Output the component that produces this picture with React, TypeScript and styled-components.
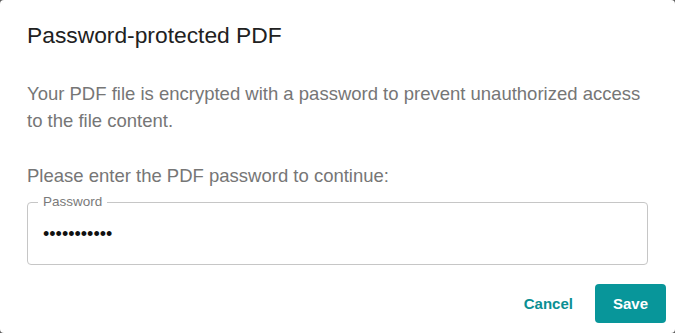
import React from 'react'
import styled, { createGlobalStyle } from 'styled-components'

const GlobalStyle = createGlobalStyle`
  html, body {
    margin: 0;
    padding: 0;
    background: #5c5c5c;
  }

  body {
    font-family: "Liberation Sans", Arial, sans-serif;
  }
`

const Dialog = styled.div`
  box-sizing: border-box;
  width: 675px;
  height: 333px;
  background: #ffffff;
  border-radius: 4px;
  display: flex;
  flex-direction: column;
`

const Body = styled.div`
  padding: 22px 27px 0;
  display: flex;
  flex-direction: column;
`

const Title = styled.h2`
  margin: 0;
  font-size: 22.8px;
  line-height: 26px;
  font-weight: 400;
  color: #212121;
`

const Text = styled.p<{ $gap: number }>`
  margin: ${({ $gap }) => $gap}px 0 0;
  font-size: 18.5px;
  line-height: 27px;
  color: #767676;
`

const Field = styled.div`
  position: relative;
  margin-top: 13px;
  height: 63px;
  box-sizing: border-box;
  border: 1px solid #c6c6c6;
  border-radius: 4px;
  display: flex;
  align-items: center;
`

const Legend = styled.label`
  position: absolute;
  top: -9px;
  left: 10px;
  padding: 0 5px;
  background: #ffffff;
  font-size: 13.5px;
  line-height: 16px;
  color: #7a7a7a;
`

const Input = styled.input`
  border: 0;
  outline: none;
  background: transparent;
  width: 100%;
  padding: 0 15px;
  margin-top: 1px;
  font-family: "Liberation Sans", Arial, sans-serif;
  font-size: 18px;
  color: #111111;
`

const Actions = styled.div`
  margin-top: auto;
  padding: 0 9px 10px 0;
  display: flex;
  justify-content: flex-end;
  align-items: center;
  gap: 10px;
`

const Button = styled.button<{ $primary?: boolean }>`
  height: 39px;
  padding: 0 ${({ $primary }) => ($primary ? 18 : 12)}px;
  border: 0;
  border-radius: 4px;
  font-family: "Liberation Sans", Arial, sans-serif;
  font-size: 15px;
  font-weight: 700;
  cursor: pointer;
  background: ${({ $primary }) => ($primary ? '#08969a' : 'transparent')};
  color: ${({ $primary }) => ($primary ? '#ffffff' : '#0a8f93')};
`

export default function App() {
  return (
    <>
      <GlobalStyle />
      <Dialog>
        <Body>
          <Title>Password-protected PDF</Title>
          <Text $gap={32}>
            Your PDF file is encrypted with a password to prevent unauthorized access to the file content.
          </Text>
          <Text $gap={28}>Please enter the PDF password to continue:</Text>
          <Field>
            <Legend htmlFor="pdf-password">Password</Legend>
            <Input id="pdf-password" type="password" defaultValue="secretpass1" readOnly />
          </Field>
        </Body>
        <Actions>
          <Button>Cancel</Button>
          <Button $primary>Save</Button>
        </Actions>
      </Dialog>
    </>
  )
}
